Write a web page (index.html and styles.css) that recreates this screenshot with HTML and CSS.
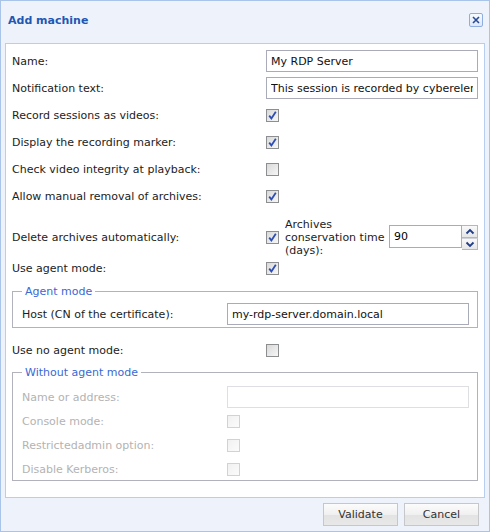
FILE: index.html
```html
<!DOCTYPE html>
<html lang="en">
<head>
    <meta charset="UTF-8">
    <title>Add machine</title>
    <link rel="stylesheet" href="styles.css">
</head>
<body>

    <div class="dialog">
        <div class="dialog-header">
            <span class="dialog-title">Add machine</span>
            <span class="close-btn">
                <svg width="12" height="12" viewBox="0 0 12 12"><path d="M3 3 L9 9 M9 3 L3 9" stroke="#2b4a96" stroke-width="1.6" fill="none"/></svg>
            </span>
        </div>

        <div class="panel">
            <div class="row">
                <label>Name:</label>
                <input class="text-input" type="text" value="My RDP Server">
            </div>
            <div class="row">
                <label>Notification text:</label>
                <input class="text-input" type="text" value="This session is recorded by cyberelements">
            </div>
            <div class="row">
                <label>Record sessions as videos:</label>
                <span class="cb checked"><svg width="11" height="11" viewBox="0 0 11 11"><path d="M2.2 5.6 L4.4 8.4 L8.8 1.8" stroke="#2d4db2" stroke-width="1.8" fill="none"/></svg></span>
            </div>
            <div class="row">
                <label>Display the recording marker:</label>
                <span class="cb checked"><svg width="11" height="11" viewBox="0 0 11 11"><path d="M2.2 5.6 L4.4 8.4 L8.8 1.8" stroke="#2d4db2" stroke-width="1.8" fill="none"/></svg></span>
            </div>
            <div class="row">
                <label>Check video integrity at playback:</label>
                <span class="cb"></span>
            </div>
            <div class="row">
                <label>Allow manual removal of archives:</label>
                <span class="cb checked"><svg width="11" height="11" viewBox="0 0 11 11"><path d="M2.2 5.6 L4.4 8.4 L8.8 1.8" stroke="#2d4db2" stroke-width="1.8" fill="none"/></svg></span>
            </div>
            <div class="row row-tall">
                <label>Delete archives automatically:</label>
                <div class="archive-ctrl">
                    <span class="cb checked"><svg width="11" height="11" viewBox="0 0 11 11"><path d="M2.2 5.6 L4.4 8.4 L8.8 1.8" stroke="#2d4db2" stroke-width="1.8" fill="none"/></svg></span>
                    <span class="archive-text">Archives conservation time (days):</span>
                    <div class="spin-box">
                        <input class="spin-input" type="text" value="90">
                        <div class="spin-buttons">
                            <span class="spin-btn"><svg width="10" height="7" viewBox="0 0 10 7"><path d="M1.5 5.5 L5 2 L8.5 5.5" stroke="#1f3d8a" stroke-width="1.8" fill="none"/></svg></span>
                            <span class="spin-btn"><svg width="10" height="7" viewBox="0 0 10 7"><path d="M1.5 1.5 L5 5 L8.5 1.5" stroke="#1f3d8a" stroke-width="1.8" fill="none"/></svg></span>
                        </div>
                    </div>
                </div>
            </div>
            <div class="row">
                <label>Use agent mode:</label>
                <span class="cb checked"><svg width="11" height="11" viewBox="0 0 11 11"><path d="M2.2 5.6 L4.4 8.4 L8.8 1.8" stroke="#2d4db2" stroke-width="1.8" fill="none"/></svg></span>
            </div>

            <fieldset class="group group-agent">
                <legend>Agent mode</legend>
                <div class="row sub-row">
                    <label>Host (CN of the certificate):</label>
                    <input class="text-input" type="text" value="my-rdp-server.domain.local">
                </div>
            </fieldset>

            <div class="row row-noagent">
                <label>Use no agent mode:</label>
                <span class="cb"></span>
            </div>

            <fieldset class="group group-noagent disabled">
                <legend>Without agent mode</legend>
                <div class="row sub-row">
                    <label>Name or address:</label>
                    <input class="text-input" type="text" disabled>
                </div>
                <div class="row sub-row">
                    <label>Console mode:</label>
                    <span class="cb"></span>
                </div>
                <div class="row sub-row">
                    <label>Restrictedadmin option:</label>
                    <span class="cb"></span>
                </div>
                <div class="row sub-row">
                    <label>Disable Kerberos:</label>
                    <span class="cb"></span>
                </div>
            </fieldset>
        </div>

        <div class="dialog-footer">
            <button class="btn">Validate</button>
            <button class="btn">Cancel</button>
        </div>
    </div>

</body>
</html>
```

FILE: styles.css
```css
body {
    margin: 0;
    padding: 0;
    font-family: "DejaVu Sans", Verdana, sans-serif;
    font-size: 11px;
    color: #1c1c1c;
    background: #ffffff;
}

.dialog {
    width: 490px;
    height: 532px;
    box-sizing: border-box;
    border: 1px solid #a9c4e9;
    background: #eef3fb;
    display: flex;
    flex-direction: column;
}

.dialog-header {
    height: 42px;
    box-sizing: border-box;
    padding: 0 6px 4px 7px;
    display: flex;
    align-items: center;
    justify-content: space-between;
}

.dialog-title {
    font-weight: bold;
    color: #1f57b4;
}

.close-btn {
    width: 12px;
    height: 12px;
    border: 1px solid #8eaee0;
    border-radius: 2px;
    background: linear-gradient(#f8fbff, #dde8f8);
    display: flex;
}

.panel {
    height: 455px;
    box-sizing: border-box;
    margin: 0 4px;
    padding: 6px;
    border: 1px solid #b7cfee;
    background: #ffffff;
    display: flex;
    flex-direction: column;
    gap: 5px;
}

.row {
    display: grid;
    grid-template-columns: 254px 1fr;
    align-items: center;
    height: 22px;
}

.row-tall {
    height: 40px;
    padding-top: 6px;
    box-sizing: border-box;
}

.text-input {
    height: 22px;
    box-sizing: border-box;
    width: 100%;
    padding: 0 4px;
    border: 1px solid #a9abb8;
    font-family: inherit;
    font-size: 11px;
    color: #111;
    background: #fff;
    outline: none;
}

.cb {
    width: 11px;
    height: 11px;
    border: 1px solid #8d8e90;
    background: linear-gradient(135deg, #d9d9d9, #f7f7f7);
    display: flex;
}

.archive-ctrl {
    display: flex;
    align-items: center;
}

.archive-text {
    width: 100px;
    margin-left: 6px;
    line-height: 13px;
}

.spin-box {
    display: flex;
    margin-left: 4px;
}

.spin-input {
    width: 73px;
    height: 23px;
    box-sizing: border-box;
    padding: 0 4px;
    border: 1px solid #a9abb8;
    font-family: inherit;
    font-size: 11px;
    outline: none;
}

.spin-buttons {
    display: flex;
    flex-direction: column;
    width: 16px;
}

.spin-btn {
    height: 11px;
    border: 1px solid #b4b6c2;
    border-left: none;
    background: linear-gradient(#f9f9f9, #e6e6e6);
    display: flex;
    align-items: center;
    justify-content: center;
}

.spin-btn + .spin-btn {
    border-top: 1px solid #d0d2da;
    height: 10px;
}

.group {
    margin: 0;
    border: 1px solid #b2b2bc;
    padding: 5px 8px 2px 9px;
    display: flex;
    flex-direction: column;
    gap: 2px;
}

.group legend {
    padding: 0 3px;
    line-height: 13px;
    color: #3a68d4;
}

.group-agent {
    margin-top: 1px;
}

.group-noagent {
    padding-top: 7px;
    padding-bottom: 0;
}

.sub-row {
    grid-template-columns: 205px 1fr;
}

.row-noagent {
    margin-top: 6px;
}

.disabled label {
    color: #b3b3b3;
}

.disabled .text-input {
    border-color: #dedfe3;
    background: #fff;
}

.disabled .cb {
    border-color: #d2d2d4;
    background: linear-gradient(135deg, #f1f1f1, #fbfbfb);
}

.dialog-footer {
    flex: 1;
    display: flex;
    justify-content: flex-end;
    align-items: flex-start;
    gap: 6px;
    padding: 5px 10px 0 0;
}

.btn {
    width: 75px;
    height: 23px;
    border: 1px solid #c6c7cb;
    background: linear-gradient(#fcfcfc 0%, #f0f0f0 50%, #e3e3e3 51%, #e8e8e8 100%);
    font-family: inherit;
    font-size: 11px;
    color: #333;
    padding: 0;
}
```
